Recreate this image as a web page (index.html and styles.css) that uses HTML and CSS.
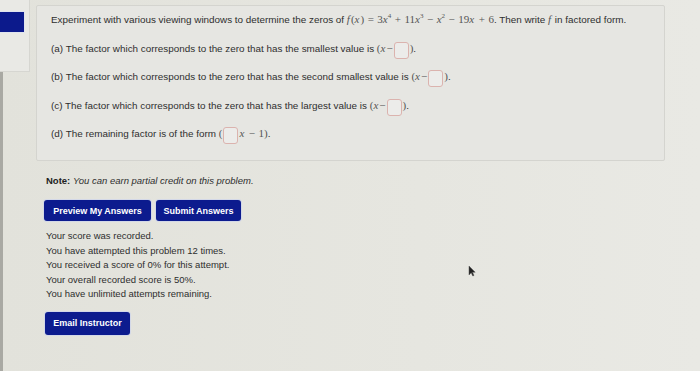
FILE: index.html
```html
<!DOCTYPE html>
<html>
<head>
<meta charset="utf-8">
<link rel="stylesheet" href="styles.css">
</head>
<body>
<div class="page">
  <aside class="sidebar">
    <div class="side-panel">
      <div class="side-active"></div>
    </div>
    <div class="side-rest"></div>
  </aside>
  <main class="main">
    <section class="problem">
      <p class="line">Experiment with various viewing windows to determine the zeros of <span class="m"><i>f</i>(<i>x</i>)<span class="op">=</span>3<i>x</i><sup>4</sup><span class="op">+</span>11<i>x</i><sup>3</sup><span class="op">−</span><i>x</i><sup>2</sup><span class="op">−</span>19<i>x</i><span class="op">+</span>6</span>. Then write <span class="m"><i>f</i></span> in factored form.</p>
      <p class="line">(a) The factor which corresponds to the zero that has the smallest value is <span class="m">(<i>x</i>−</span><span class="ans"></span><span class="m">)</span>.</p>
      <p class="line">(b) The factor which corresponds to the zero that has the second smallest value is <span class="m">(<i>x</i>−</span><span class="ans"></span><span class="m">)</span>.</p>
      <p class="line">(c) The factor which corresponds to the zero that has the largest value is <span class="m">(<i>x</i>−</span><span class="ans"></span><span class="m">)</span>.</p>
      <p class="line">(d) The remaining factor is of the form <span class="m">(</span><span class="ans"></span><span class="m"><i>x</i><span class="op">−</span>1)</span>.</p>
    </section>
    <p class="note"><b>Note:</b> <i>You can earn partial credit on this problem.</i></p>
    <div class="buttons">
      <span class="btn">Preview My Answers</span>
      <span class="btn">Submit Answers</span>
    </div>
    <div class="score">
      <div>Your score was recorded.</div>
      <div>You have attempted this problem 12 times.</div>
      <div>You received a score of 0% for this attempt.</div>
      <div>Your overall recorded score is 50%.</div>
      <div>You have unlimited attempts remaining.</div>
    </div>
    <span class="btn email">Email Instructor</span>
  </main>
</div>
<svg class="cursor" width="8" height="12" viewBox="0 0 8 12"><path d="M1 1 L1 10 L3.2 7.8 L4.8 11 L6 10.4 L4.5 7.3 L7.2 7.2 Z" fill="#222" stroke="#555" stroke-width="0.5"/></svg>
</body>
</html>
```

FILE: styles.css
```css
html, body {
  margin: 0;
  padding: 0;
}
body {
  width: 700px;
  height: 371px;
  overflow: hidden;
  background: linear-gradient(90deg, #e2e2db 0%, #e6e6e0 60%, #e9e9e4 100%);
  font-family: "Liberation Sans", Arial, sans-serif;
  font-size: 9.5px;
  color: #2e2e2e;
  position: relative;
}
.page {
  display: flex;
  height: 371px;
}
.sidebar {
  width: 30px;
  display: flex;
  flex-direction: column;
}
.side-panel {
  height: 72px;
  background: #e9e9e5;
  border-right: 1px solid #d6d6d1;
  border-bottom: 1px solid #d6d6d1;
  box-sizing: border-box;
  padding-top: 12px;
}
.side-active {
  width: 24px;
  height: 20px;
  background: #0c1a8c;
  box-shadow: 0 0 0 1px #e0e4ee;
}
.side-rest {
  flex: 1;
  border-left: 3px solid #a9a9a3;
}
.main {
  flex: 1;
  padding: 5px 0 0 6px;
}
.problem {
  width: 629px;
  box-sizing: border-box;
  background: #e6e6e2;
  border: 1px solid #d4d4cf;
  border-radius: 2px;
  padding: 6px 14px 20px 14px;
  font-size: 9.9px;
}
.line {
  margin: 0 0 14.5px 0;
  height: 14px;
  line-height: 14px;
  white-space: nowrap;
}
.line:last-child {
  margin-bottom: 0;
}
.m {
  font-family: "Liberation Serif", serif;
  font-size: 11px;
  color: #555;
}
.m i {
  margin-right: 1px;
}
.op {
  margin: 0 3.5px;
}
.m sup {
  font-size: 7px;
  vertical-align: 5px;
  line-height: 0;
  margin-left: -1px;
}
.ans {
  display: inline-block;
  width: 13px;
  height: 15px;
  border: 1px solid #dbb3ae;
  border-radius: 3px;
  background: #ececea;
  vertical-align: -4px;
  margin: -3px 1px;
}
.note {
  margin: 13px 0 0 10px;
  line-height: 14px;
}
.note b {
  color: #222;
}
.buttons {
  display: flex;
  gap: 5px;
  margin: 12px 0 0 8px;
}
.btn {
  display: inline-flex;
  align-items: center;
  justify-content: center;
  white-space: nowrap;
  height: 21px;
  box-sizing: border-box;
  background: #0c1b8e;
  color: #fff;
  font-weight: bold;
  font-size: 9px;
  border-radius: 3px;
  box-shadow: 0 0 0 1px #d3d8e8;
  padding: 0;
}
.buttons .btn:first-child {
  width: 107px;
}
.buttons .btn:last-child {
  width: 85px;
}
.score {
  margin: 8px 0 0 10px;
  line-height: 14.5px;
}
.email {
  margin: 10px 0 0 9px;
  height: 23px;
  width: 85px;
}
.cursor {
  position: absolute;
  left: 468px;
  top: 265px;
}
```
